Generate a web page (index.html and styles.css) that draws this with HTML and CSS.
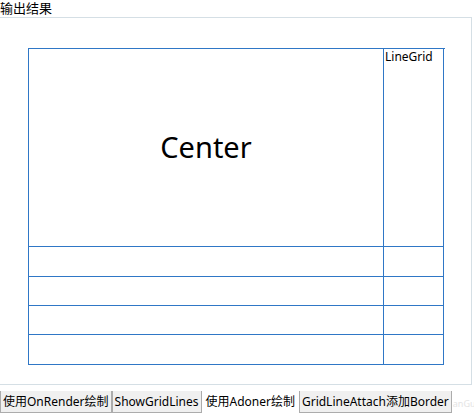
FILE: index.html
```html
<!DOCTYPE html>
<html lang="zh-CN">
<head>
    <meta charset="UTF-8">
    <title>输出结果</title>
    <link rel="stylesheet" href="styles.css">
</head>
<body>
    <div class="group-header">输出结果</div>
    <div class="group-panel">
        <div class="line-grid">
            <div class="cell center-cell">Center</div>
            <div class="cell side-cell">LineGrid</div>
            <div class="cell"></div>
            <div class="cell"></div>
            <div class="cell"></div>
            <div class="cell"></div>
            <div class="cell"></div>
            <div class="cell"></div>
            <div class="cell"></div>
            <div class="cell"></div>
        </div>
    </div>
    <div class="tab-strip">
        <div class="tab">使用OnRender绘制</div>
        <div class="tab">ShowGridLines</div>
        <div class="tab selected">使用Adoner绘制</div>
        <div class="tab">GridLineAttach添加Border</div>
        <div class="watermark">anGu</div>
    </div>
</body>
</html>
```

FILE: styles.css
```css
body {
    margin: 0;
    width: 474px;
    height: 413px;
    overflow: hidden;
    font-family: "Noto Sans", "Noto Sans CJK SC", sans-serif;
    color: #000;
    background-color: #fff;
}
.group-header {
    height: 17px;
    font-size: 13px;
    line-height: 16px;
    white-space: nowrap;
}
.group-panel {
    width: 472px;
    height: 368px;
    padding: 30px 0 0 28px;
    box-sizing: border-box;
    border-top: 1px solid #d5dfe5;
    border-right: 1px solid #d5dfe5;
    border-bottom: 1px solid #d5dfe5;
}
.line-grid {
    display: grid;
    grid-template-columns: 355px 60px;
    grid-template-rows: 198px 30px 29px 29px 30px;
    width: 416px;
    border-left: 1px solid #2f77c6;
    border-top: 1px solid #2f77c6;
}
.cell {
    border-right: 1px solid #2f77c6;
    border-bottom: 1px solid #2f77c6;
}
.center-cell {
    display: flex;
    align-items: center;
    justify-content: center;
    font-size: 29px;
    padding-bottom: 2px;
}
.side-cell {
    font-size: 12px;
    line-height: 14px;
    padding-left: 1px;
    padding-top: 1px;
}
.tab-strip {
    display: flex;
    align-items: flex-end;
    height: 28px;
    font-size: 12px;
    white-space: nowrap;
}
.tab {
    height: 22px;
    line-height: 22px;
    padding: 0 2px;
    background-color: #f0f0f0;
    border: 1px solid #acacac;
    border-top: none;
    box-sizing: border-box;
    margin-right: 0;
}
.tab.selected {
    background-color: #fff;
    border-color: #fff;
    padding: 0 3px;
}
.watermark {
    font-size: 9px;
    color: #e4e4e4;
    line-height: 18px;
    margin-left: 1px;
}
```
